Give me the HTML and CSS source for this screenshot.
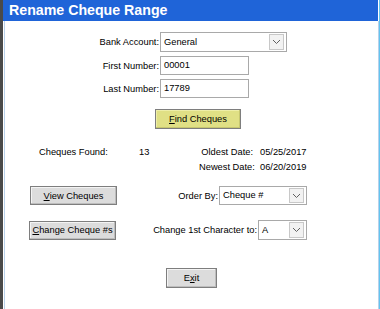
FILE: index.html
```html
<!DOCTYPE html>
<html lang="en">
<head>
  <meta charset="UTF-8">
  <title>Rename Cheque Range</title>
  <link rel="stylesheet" href="styles.css">
</head>
<body>
  <div class="window">
    <h1 class="title">Rename Cheque Range</h1>

    <div class="content">
      <!-- account and range -->
      <div class="field first">
        <span class="lbl">Bank Account:</span>
        <div class="select bank">General<span class="arrow"><svg width="9" height="6" viewBox="0 0 9 6"><path d="M1 1l3.5 3.5L8 1" fill="none" stroke="#606060" stroke-width="1"/></svg></span></div>
      </div>
      <div class="field">
        <span class="lbl">First Number:</span>
        <div class="input">00001</div>
      </div>
      <div class="field">
        <span class="lbl">Last Number:</span>
        <div class="input">17789</div>
      </div>

      <button class="btn find"><u>F</u>ind Cheques</button>

      <!-- results -->
      <div class="info">
        <span class="found">Cheques Found:</span>
        <span class="count">13</span>
        <span class="dlbl">Oldest Date:</span>
        <span class="dval">05/25/2017</span>
        <span class="dlbl">Newest Date:</span>
        <span class="dval">06/20/2019</span>
      </div>

      <div class="row view-row">
        <button class="btn view"><u>V</u>iew Cheques</button>
        <div class="pick">
          <span>Order By:</span>
          <div class="select order">Cheque #<span class="arrow"><svg width="9" height="6" viewBox="0 0 9 6"><path d="M1 1l3.5 3.5L8 1" fill="none" stroke="#606060" stroke-width="1"/></svg></span></div>
        </div>
      </div>

      <div class="row change-row">
        <button class="btn change"><u>C</u>hange Cheque #s</button>
        <div class="pick">
          <span>Change 1st Character to:</span>
          <div class="select char">A<span class="arrow"><svg width="9" height="6" viewBox="0 0 9 6"><path d="M1 1l3.5 3.5L8 1" fill="none" stroke="#606060" stroke-width="1"/></svg></span></div>
        </div>
      </div>

      <button class="btn exit">E<u>x</u>it</button>
    </div>
  </div>
</body>
</html>
```

FILE: styles.css
```css
* {
  box-sizing: border-box;
}

body {
  margin: 0;
  font-family: "Liberation Sans", Arial, sans-serif;
  font-size: 9.3px;
  color: #000;
  background: #fff;
}

.window {
  width: 380px;
  height: 309px;
  display: flex;
  flex-direction: column;
  border-left: 3px solid #4a4a4a;
  border-right: 1px solid #62c4f0;
  background: #fff;
}

.title {
  margin: 0 1px 0 0;
  height: 21px;
  padding: 2px 0 0 6px;
  background-color: #1f64d8;
  color: #fff;
  font-size: 14.2px;
  font-weight: bold;
  line-height: 17px;
}

.content {
  flex: 1;
  margin-left: 1px;
  border-left: 1px solid #b9d1ea;
  border-right: 1px solid #b9d1ea;
  display: flex;
  flex-direction: column;
  align-items: flex-start;
}

/* label + control rows */
.field {
  display: flex;
  align-items: center;
  margin-top: 4px;
}

.field.first {
  margin-top: 11px;
}

.lbl {
  width: 155px;
  text-align: right;
  padding-right: 1px;
}

.input,
.select {
  position: relative;
  height: 19px;
  border: 1px solid #a9a9a9;
  background: #fff;
  padding: 0 0 0 3px;
  line-height: 17px;
}

.input {
  width: 89px;
}

.select.bank {
  width: 127px;
  height: 20px;
  line-height: 18px;
}

.arrow {
  position: absolute;
  right: 2px;
  top: 1px;
  bottom: 1px;
  width: 15px;
  border: 1px solid #c8c8c8;
  background: #f2f2f2;
  display: flex;
  align-items: center;
  justify-content: center;
}

/* buttons */
.btn {
  font-family: inherit;
  font-size: 9.3px;
  color: #000;
  height: 19px;
  padding: 0;
  background: #dcdcdc;
  border: 1px solid #7e7e7e;
  box-shadow: inset -1px -1px 0 #bdbdbd, inset 1px 1px 0 #f4f4f4;
}

.find {
  margin: 11px 0 0 150px;
  width: 86px;
  height: 20px;
  background: #e0e085;
  box-shadow: inset -1px -1px 0 #c6c670, inset 1px 1px 0 #eeeea8;
}

/* results block */
.info {
  display: grid;
  grid-template-columns: 100px 60px 54px auto;
  grid-auto-rows: 15px;
  line-height: 15px;
  margin: 16px 0 0 34px;
}

.found {
  grid-row: 1;
}

.count {
  grid-row: 1;
  grid-column: 2;
}

.dlbl {
  grid-column: 3;
  text-align: right;
  white-space: nowrap;
}

.dval {
  grid-column: 4;
  padding-left: 7px;
}

.info .dlbl:nth-of-type(3) {
  grid-row: 1;
}

.info .dlbl:nth-of-type(5) {
  grid-row: 2;
}

/* lower rows */
.row {
  display: flex;
  align-items: center;
  width: 302px;
}

.view-row {
  margin-top: 11px;
}

.change-row {
  margin-top: 15px;
}

.pick {
  margin-left: auto;
  display: flex;
  align-items: center;
  gap: 1px;
}

.view {
  margin-left: 25px;
  width: 87px;
}

.change {
  margin-left: 24px;
  width: 87px;
}

.select.order {
  width: 88px;
}

.select.char {
  width: 49px;
  height: 20px;
  line-height: 18px;
}

.exit {
  margin: 28px 0 0 161px;
  width: 51px;
  height: 20px;
}
```
